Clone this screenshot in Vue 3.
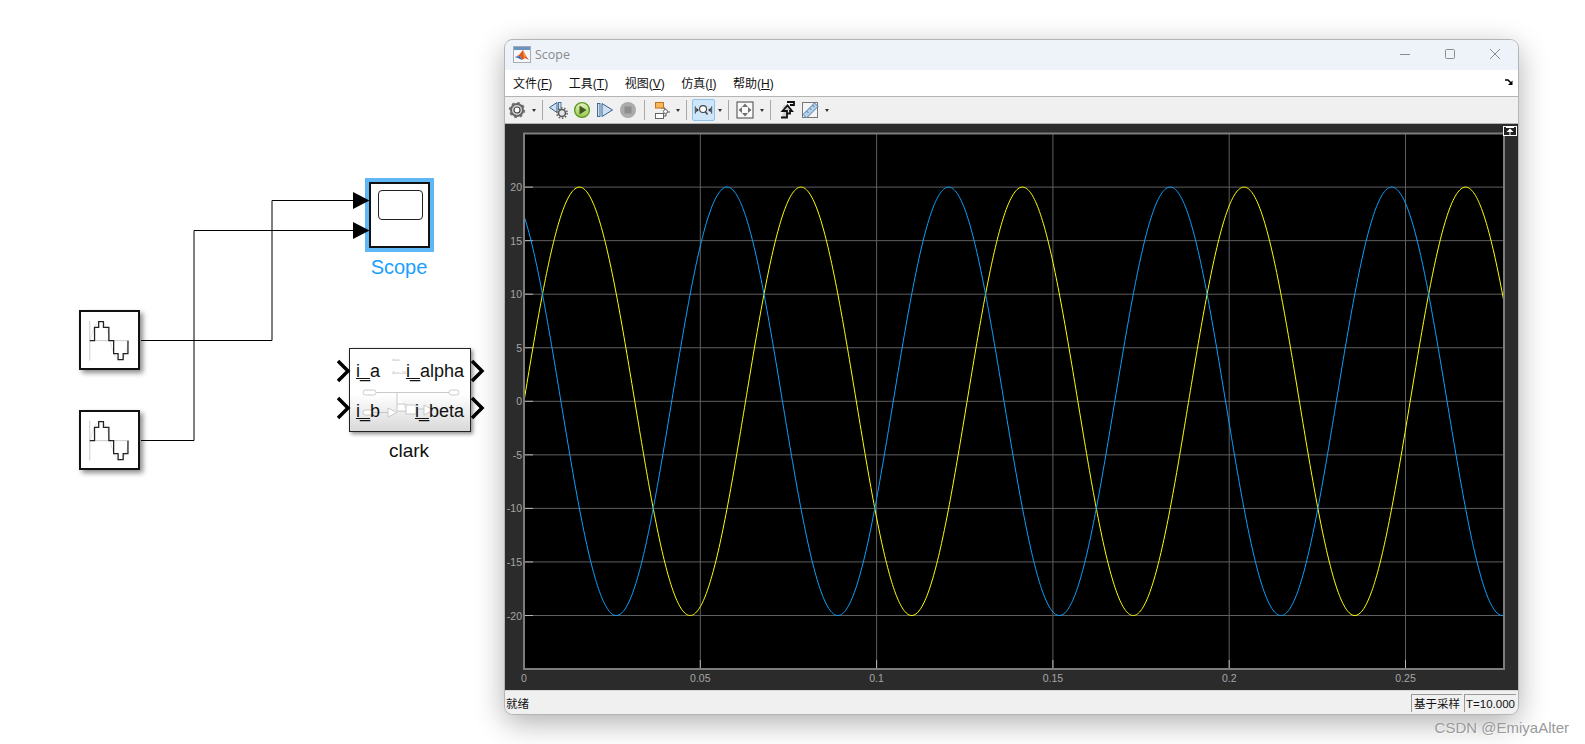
<script setup>
import { computed } from "vue";

// 绘图区坐标换算（svg 局部像素）
const plotLeft = 19;
const plotRight = 999;
const plotTop = 9.5;
const plotBottom = 545;
const xScale = 3526;
const yScale = 10.71;
const yZero = 277.3;

const toX = (t) => plotLeft + t * xScale;
const toY = (v) => yZero - v * yScale;

const yTicks = [20, 15, 10, 5, 0, -5, -10, -15, -20];
const xTicks = [
  { value: 0, label: "0" },
  { value: 0.05, label: "0.05" },
  { value: 0.1, label: "0.1" },
  { value: 0.15, label: "0.15" },
  { value: 0.2, label: "0.2" },
  { value: 0.25, label: "0.25" },
];

const buildWave = (phase) => {
  const pts = [];
  const end = (plotRight - plotLeft) / xScale;
  for (let i = 0; i <= 1000; i++) {
    const t = (end * i) / 1000;
    pts.push(`${toX(t).toFixed(2)},${toY(20 * Math.sin(100 * t + phase)).toFixed(2)}`);
  }
  return pts.join(" ");
};

const yellowWave = computed(() => buildWave(0));
const blueWave = computed(() => buildWave((2 * Math.PI) / 3));

const menus = [
  { name: "文件", key: "F" },
  { name: "工具", key: "T" },
  { name: "视图", key: "V" },
  { name: "仿真", key: "I" },
  { name: "帮助", key: "H" },
];

const sources = ["source-a", "source-b"];
</script>

<template>
  <div class="desktop">
    <!-- Simulink 模型 -->
    <div v-for="s in sources" :key="s" class="source" :class="s">
      <svg width="57" height="56" viewBox="60 422 178 176">
        <path class="src-axis" d="M87 450V575M87 512H210" />
        <path class="src-sine" d="M87 512C100 470 108 450 119 450C135 450 148 490 150 512C160 550 170 573 181 573C195 573 205 540 210 512" />
        <path class="src-step" d="M87 512H102V470H115V452H130V470H147V512H162V553H176V572H192V553H207V512" />
      </svg>
    </div>

    <div class="scope-block">
      <div class="scope-screen"></div>
    </div>
    <div class="scope-name">Scope</div>

    <svg class="wires" width="500" height="500" viewBox="0 0 500 500">
      <polyline points="141,340.5 272,340.5 272,200.5 356,200.5" />
      <polyline points="141,440.5 194,440.5 194,230.5 356,230.5" />
      <polygon class="arrow" points="353,192 369.500,200.500 353,209" />
      <polygon class="arrow" points="353,222 369.500,230.500 353,239" />
    </svg>

    <div class="clark-block">
      <svg class="clark-art" width="120" height="82" viewBox="0 0 120 82">
        <g class="art-line">
          <rect x="13" y="41" width="13" height="5" rx="2.5" />
          <rect x="99" y="41" width="10" height="5" rx="2.5" />
          <path d="M26 43.5H99M47 43.500V62H56M47 55H56" />
          <rect x="13" y="61" width="10" height="5" rx="2.5" />
          <path d="M23 63.500H38" />
          <polygon points="38,59 38,68 47,63.500" />
          <rect x="56" y="56" width="10" height="9" />
          <path d="M66 60H74" />
          <polygon points="74,56 74,66 83,61" />
        </g>
        <g class="art-eq">
          <text x="42" y="12">iα=ia</text>
          <text x="42" y="25">iβ=ia+2ib</text>
        </g>
      </svg>
      <span class="port-label port-ia"><span class="ul">i_</span>a</span>
      <span class="port-label port-ib"><span class="ul">i_</span>b</span>
      <span class="port-label port-alpha"><span class="ul">i_</span>alpha</span>
      <span class="port-label port-beta"><span class="ul">i_</span>beta</span>
    </div>
    <svg class="clark-ports" width="150" height="62" viewBox="0 0 150 62">
      <path d="M1 2L11 12L1 22M1 39L11 49L1 59" />
      <path d="M135 2L145 12L135 22M135 39L145 49L135 59" />
    </svg>
    <div class="clark-name">clark</div>

    <!-- Scope 窗口 -->
    <div class="scope-window">
      <div class="title-bar">
        <svg class="app-logo" width="18" height="17" viewBox="0 0 18 17">
          <rect x="0.500" y="0.500" width="17" height="16" fill="#f6f7f9" stroke="#a5acb5" />
          <rect x="1" y="1" width="16" height="3" fill="#6b93c0" />
          <path d="M2 11L6 9L10 4L13 10L16 14L12 12L9 14L7 10Z" fill="#e2561f" />
          <path d="M2 11L7 10L9 14L6 12.500Z" fill="#2a6fb8" />
          <path d="M10 4L13 10L11 12Z" fill="#f2a23a" />
        </svg>
        <span class="title-text">Scope</span>
        <div class="win-buttons">
          <svg width="12" height="12" viewBox="0 0 12 12"><path d="M1 6.500H11" /></svg>
          <svg width="12" height="12" viewBox="0 0 12 12"><rect x="1.500" y="1.500" width="9" height="9" rx="1" /></svg>
          <svg width="12" height="12" viewBox="0 0 12 12"><path d="M1 1L11 11M11 1L1 11" /></svg>
        </div>
      </div>

      <div class="menu-bar">
        <span v-for="m in menus" :key="m.key" class="menu-item">{{ m.name }}(<span class="ul">{{ m.key }}</span>)</span>
        <svg class="menu-dock" width="8" height="7" viewBox="0 0 8 7">
          <path d="M0 1H3L6 4" />
          <path class="dock-head" d="M3 6L7.500 6V1.500Z" />
        </svg>
      </div>

      <div class="tool-bar">
        <!-- 参数 -->
        <svg class="tb-icon" viewBox="0 0 22 22">
          <circle cx="11" cy="11" r="6" fill="#d4d4d4" stroke="#666" stroke-width="2" />
          <circle cx="11" cy="11" r="7.200" fill="none" stroke="#6e6e6e" stroke-width="1.800" stroke-dasharray="2.800 2.850" />
          <circle cx="11" cy="11" r="3" fill="#fff" stroke="#444" stroke-width="1.200" />
        </svg>
        <i class="caret"></i>
        <i class="sep"></i>
        <!-- 后退 -->
        <svg class="tb-icon" viewBox="0 0 22 22">
          <path d="M9 3.500V13.500L1.500 8.500Z" fill="#cfe0f2" stroke="#34608f" />
          <rect x="10.500" y="3.500" width="2.500" height="7" fill="#cfe0f2" stroke="#34608f" stroke-width="0.800" />
          <circle cx="14" cy="14" r="3.500" fill="#e4e4e4" stroke="#555" stroke-width="1.600" />
          <circle cx="14" cy="14" r="5.200" fill="none" stroke="#666" stroke-width="1.500" stroke-dasharray="1.600 1.650" />
        </svg>
        <!-- 运行 -->
        <svg class="tb-icon" viewBox="0 0 22 22">
          <defs>
            <linearGradient id="playFill" x1="0" y1="0" x2="0" y2="1">
              <stop offset="0" stop-color="#e8f3c4" />
              <stop offset="1" stop-color="#97c745" />
            </linearGradient>
          </defs>
          <circle cx="11" cy="11" r="7.400" fill="url(#playFill)" stroke="#5c9a24" stroke-width="1.400" />
          <path d="M8.500 6.500V15.500L15.500 11Z" fill="#3f5a1e" />
        </svg>
        <!-- 步进 -->
        <svg class="tb-icon" viewBox="0 0 22 22">
          <rect x="3.500" y="4.500" width="2.500" height="13" fill="#cfe0f2" stroke="#34608f" stroke-width="0.900" />
          <path d="M8 4.500V17.500L18.500 11Z" fill="#cfe0f2" stroke="#34608f" />
        </svg>
        <!-- 停止 -->
        <svg class="tb-icon" viewBox="0 0 22 22">
          <circle cx="11" cy="11" r="8" fill="#ababab" />
          <rect x="7.500" y="7.500" width="7" height="7" fill="#8e8e8e" />
        </svg>
        <i class="sep"></i>
        <!-- 信号选择 -->
        <svg class="tb-icon" viewBox="0 0 22 22">
          <path d="M11 9H15V12M13 17H16V14M17 13H20" fill="none" stroke="#555" />
          <rect x="5.500" y="3.500" width="8" height="5.500" fill="#f5b95c" stroke="#c5701c" />
          <rect x="5.500" y="14.500" width="8" height="5" fill="#fff" stroke="#666" />
          <circle cx="15.500" cy="12.500" r="2" fill="#fff" stroke="#666" />
        </svg>
        <i class="caret"></i>
        <i class="sep"></i>
        <!-- 缩放 -->
        <div class="tb-toggle">
          <svg class="tb-icon" viewBox="0 0 22 22">
            <path d="M2 7V15M20 7V15" fill="none" stroke="#333" />
            <path d="M3 8.500L6 11L3 13.500ZM19 8.500L16 11L19 13.500Z" fill="#333" />
            <circle cx="10.500" cy="10" r="3.800" fill="#fff" stroke="#444" stroke-width="1.200" />
            <path d="M13 13L15.500 16" stroke="#444" stroke-width="1.600" />
          </svg>
        </div>
        <i class="caret"></i>
        <i class="sep"></i>
        <!-- 适应 -->
        <svg class="tb-icon" viewBox="0 0 22 22">
          <rect x="3" y="3" width="16" height="16" fill="#fafafa" stroke="#444" />
          <path d="M11 4.500L14 8H8ZM11 17.500L8 14H14ZM4.500 11L8 8V14ZM17.500 11L14 14V8Z" fill="#707070" />
        </svg>
        <i class="caret"></i>
        <i class="sep"></i>
        <!-- 阶梯 -->
        <svg class="tb-icon" viewBox="0 0 22 22">
          <path d="M6 18H11V11H15L9 5.500L6 9H9" fill="#cfcfcf" stroke="none" />
          <path d="M5 18.500H11V12H6.500L11.500 6.500L16 12H14V14.500H11" fill="none" stroke="#111" stroke-width="1.800" />
          <path d="M11 3H18V6H14" fill="none" stroke="#111" stroke-width="1.800" />
        </svg>
        <!-- 标尺 -->
        <svg class="tb-icon" viewBox="0 0 22 22">
          <rect x="3.500" y="3.500" width="15" height="15" fill="#f4f4f4" stroke="#777" />
          <path d="M4 15.500L15.500 4L19 7.500L7.500 19Z" fill="#b4d0ea" stroke="#4f7ba6" />
          <path d="M7.500 12L9.500 14M10.500 9L12.500 11M13.500 6L15.500 8" stroke="#4f7ba6" fill="none" />
        </svg>
        <i class="caret"></i>
      </div>

      <div class="plot-panel">
        <svg class="plot" width="1013" height="566" viewBox="0 0 1013 566">
          <rect :x="plotLeft" :y="plotTop" :width="plotRight - plotLeft" :height="plotBottom - plotTop" fill="#000" />
          <g class="grid">
            <line v-for="v in yTicks" :key="v" :x1="plotLeft" :x2="plotRight" :y1="toY(v)" :y2="toY(v)" />
            <line v-for="t in xTicks.slice(1)" :key="t.label" :x1="toX(t.value)" :x2="toX(t.value)" :y1="plotTop" :y2="plotBottom" />
          </g>
          <g class="tick">
            <line v-for="v in yTicks" :key="v" :x1="plotLeft" :x2="plotLeft + 9" :y1="toY(v)" :y2="toY(v)" />
            <line v-for="t in xTicks.slice(1)" :key="t.label" :x1="toX(t.value)" :x2="toX(t.value)" :y1="plotBottom - 9" :y2="plotBottom" />
          </g>
          <polyline class="wave wave-yellow" :points="yellowWave" />
          <polyline class="wave wave-blue" :points="blueWave" />
          <rect class="axes-frame" :x="plotLeft" :y="plotTop" :width="plotRight - plotLeft" :height="plotBottom - plotTop" />
          <text v-for="v in yTicks" :key="v" class="axis-text" text-anchor="end" :x="plotLeft - 2" :y="toY(v) + 4">{{ v }}</text>
          <text v-for="t in xTicks" :key="t.label" class="axis-text" text-anchor="middle" :x="toX(t.value)" y="558">{{ t.label }}</text>
        </svg>
        <div class="legend-btn">
          <svg width="10" height="8" viewBox="0 0 10 8"><path d="M1 0.500H9M5 8V2.500" /><path class="legend-head" d="M1.500 5L5 1.500L8.500 5Z" /></svg>
        </div>
      </div>

      <div class="status-bar">
        <span class="status-text">就绪</span>
        <span class="status-pane pane-mode">基于采样</span>
        <span class="status-pane pane-time">T=10.000</span>
      </div>
    </div>

    <div class="watermark">CSDN @EmiyaAlter</div>
  </div>
</template>

<style>
html,
body {
  margin: 0;
  background: #fff;
}
</style>

<style scoped>
.desktop {
  position: relative;
  width: 1585px;
  height: 744px;
  overflow: hidden;
  background: #fff;
  font-family: "Liberation Sans", "Noto Sans CJK SC", sans-serif;
}

.ul {
  text-decoration: underline;
}

/* 模型画布 */
.wires {
  position: absolute;
  left: 0;
  top: 0;
  fill: none;
  stroke: #000;
  stroke-width: 1;
}

.arrow {
  fill: #000;
  stroke: none;
}

.source {
  position: absolute;
  left: 79px;
  width: 57px;
  height: 56px;
  border: 2px solid #111;
  background: #fff;
  box-shadow: 3px 3px 5px rgba(0, 0, 0, 0.45);
}

.source svg {
  display: block;
}

.source-a {
  top: 310px;
}

.source-b {
  top: 410px;
}

.src-axis {
  fill: none;
  stroke: #c8c8c8;
  stroke-width: 3;
}

.src-sine {
  fill: none;
  stroke: #d4d4d4;
  stroke-width: 2;
}

.src-step {
  fill: none;
  stroke: #222;
  stroke-width: 4;
}

.scope-block {
  position: absolute;
  left: 369px;
  top: 182px;
  width: 57px;
  height: 62px;
  border: 2px solid #111;
  background: #fff;
  box-shadow: 0 0 0 4px #5fb8f5;
}

.scope-screen {
  width: 43px;
  height: 28px;
  margin: 6px 0 0 7px;
  border: 1px solid #222;
  border-radius: 4px;
}

.scope-name {
  position: absolute;
  left: 349px;
  top: 255px;
  width: 100px;
  text-align: center;
  font-size: 20px;
  line-height: 24px;
  color: #1a9fff;
}

.clark-block {
  position: absolute;
  left: 349px;
  top: 348px;
  width: 120px;
  height: 82px;
  border: 1px solid #222;
  background: linear-gradient(#fff 55%, #d9d9d9);
  box-shadow: 2px 2px 4px rgba(0, 0, 0, 0.45);
}

.clark-art {
  position: absolute;
  left: 0;
  top: 0;
}

.art-line {
  fill: #fff;
  stroke: #bdbdbd;
  stroke-width: 0.800;
}

.art-eq {
  fill: #b5b5b5;
  font-size: 3.500px;
}

.port-label {
  position: absolute;
  font-size: 18px;
  line-height: 20px;
  color: #111;
}

.port-ia {
  left: 6px;
  top: 12px;
}

.port-ib {
  left: 6px;
  top: 52px;
}

.port-alpha {
  right: 6px;
  top: 12px;
}

.port-beta {
  right: 6px;
  top: 52px;
}

.clark-ports {
  position: absolute;
  left: 337px;
  top: 359px;
  fill: none;
  stroke: #000;
  stroke-width: 3.500;
}

.clark-name {
  position: absolute;
  left: 359px;
  top: 439px;
  width: 100px;
  text-align: center;
  font-size: 19px;
  line-height: 23px;
  color: #111;
}

/* Scope 窗口 */
.scope-window {
  position: absolute;
  left: 505px;
  top: 40px;
  width: 1013px;
  height: 674px;
  display: flex;
  flex-direction: column;
  box-sizing: border-box;
  border-radius: 8px;
  overflow: hidden;
  background: #f0f0f0;
  box-shadow: 0 0 0 1px #b5b5b5, 0 8px 30px rgba(0, 0, 0, 0.33);
}

.title-bar {
  flex: none;
  height: 30px;
  display: flex;
  align-items: center;
  padding: 0 0 2px 8px;
  box-sizing: border-box;
  background: #eef3fa;
}

.app-logo {
  margin-right: 4px;
}

.title-text {
  font-family: "Open Sans", "Liberation Sans", sans-serif;
  font-size: 12.500px;
  color: #8a8a8a;
}

.win-buttons {
  margin-left: auto;
  margin-right: 17px;
  display: flex;
  gap: 33px;
}

.win-buttons svg {
  fill: none;
  stroke: #8c8c8c;
  stroke-width: 1;
}

.menu-bar {
  flex: none;
  height: 27px;
  display: flex;
  align-items: center;
  gap: 16.500px;
  padding: 0 0 2px 8px;
  box-sizing: border-box;
  border-bottom: 1px solid #b4b4b4;
  background: #fff;
  font-size: 12px;
  color: #111;
}

.menu-dock {
  margin-left: auto;
  margin-right: 5px;
  fill: none;
  stroke: #000;
  stroke-width: 1.500;
}

.dock-head {
  fill: #000;
  stroke: none;
}

.tool-bar {
  flex: none;
  height: 27px;
  display: flex;
  align-items: center;
  padding-left: 1px;
  box-sizing: border-box;
  border-bottom: 1px solid #b4b4b4;
  background: #f0f0f0;
}

.tb-icon {
  flex: none;
  width: 22px;
  height: 22px;
  margin-right: 1px;
}

.caret {
  flex: none;
  width: 0;
  height: 0;
  margin: 0 2px 0 3px;
  border-left: 2.500px solid transparent;
  border-right: 2.500px solid transparent;
  border-top: 3px solid #333;
}

.sep {
  flex: none;
  width: 1px;
  height: 20px;
  margin: 0 5px 0 4px;
  background: #a8a8a8;
}

.tb-toggle {
  flex: none;
  width: 23px;
  height: 22px;
  box-sizing: border-box;
  border: 1px solid #8cc4f0;
  border-radius: 2px;
  background: #cfe6fa;
}

.tb-toggle .tb-icon {
  display: block;
  width: 21px;
  height: 20px;
  margin: 0;
}

.plot-panel {
  position: relative;
  flex: none;
  height: 566px;
  background: #2b2b2b;
}

.plot {
  display: block;
}

.grid line {
  stroke: #5f5f5f;
  stroke-width: 1;
}

.tick line {
  stroke: #b5b5b5;
  stroke-width: 1;
}

.wave {
  fill: none;
  stroke-width: 1;
}

.wave-yellow {
  stroke: #ffff00;
}

.wave-blue {
  stroke: #0aa0ff;
}

.axes-frame {
  fill: none;
  stroke: #7d7d7d;
  stroke-width: 2;
}

.axis-text {
  fill: #a6a6a6;
  font-size: 10.500px;
}

.legend-btn {
  position: absolute;
  right: 1px;
  top: 2px;
  width: 12px;
  height: 8px;
  display: flex;
  align-items: center;
  justify-content: center;
  border: 1px solid #fff;
  background: #222;
}

.legend-btn svg {
  fill: none;
  stroke: #fff;
}

.legend-head {
  fill: #fff;
  stroke: none;
}

.status-bar {
  flex: 1;
  display: flex;
  align-items: center;
  padding: 0 2px 0 1px;
  border-top: 1px solid #d9d9d9;
  background: #f0f0f0;
  font-size: 11.500px;
  color: #111;
}

.status-text {
  margin-right: auto;
}

.status-pane {
  height: 18px;
  line-height: 18px;
  box-sizing: border-box;
  border-top: 1px solid #9a9a9a;
  border-left: 1px solid #9a9a9a;
  text-align: center;
}

.pane-mode {
  width: 51px;
  margin-right: 2px;
}

.pane-time {
  width: 52px;
}

.watermark {
  position: absolute;
  right: 16px;
  top: 719px;
  font-size: 15px;
  line-height: 18px;
  color: #9a9a9a;
  text-shadow: 1px 1px 1px rgba(255, 255, 255, 0.7);
}
</style>
